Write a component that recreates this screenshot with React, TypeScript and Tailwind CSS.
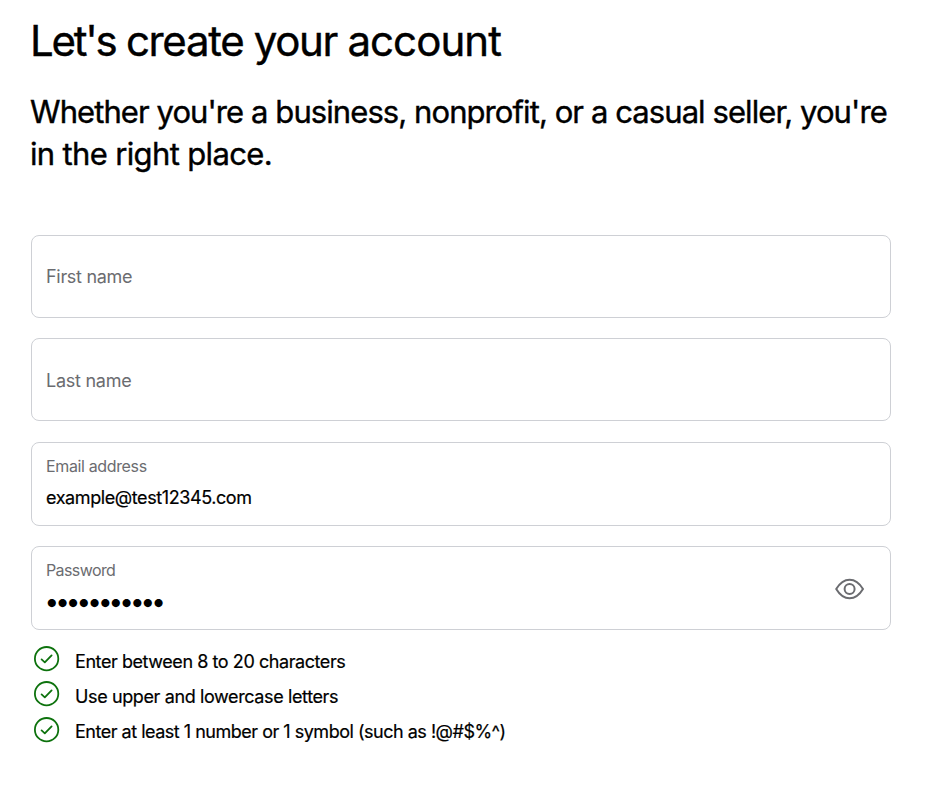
import type { ReactNode } from "react";

function Field({ className, children }: { className: string; children: ReactNode }) {
  return (
    <div className={`flex w-[860px] rounded-[8px] border border-[#ced0d5] bg-white pl-[14px] pr-[25px] ${className}`}>
      {children}
    </div>
  );
}

function EyeIcon() {
  return (
    <svg className="mt-px" width="30" height="22" viewBox="0 0 30 22" fill="none" stroke="#6b6c70" strokeWidth="2">
      <path d="M1.200 11C4.700 5.200 9.200 1.700 14.600 1.700S24.500 5.200 28 11C24.500 16.800 20 20.300 14.600 20.300S4.700 16.800 1.200 11Z" strokeLinejoin="round" />
      <circle cx="14.6" cy="11" r="5" />
    </svg>
  );
}

function CheckIcon() {
  return (
    <svg className="shrink-0" width="26" height="26" viewBox="0 0 26 26" fill="none" stroke="#0d720d">
      <circle cx="12.6" cy="12.7" r="11.7" strokeWidth="1.8" />
      <path d="M7.600 13.400L10.800 16.300L17.600 9.400" strokeWidth="1.800" strokeLinecap="round" strokeLinejoin="round" />
    </svg>
  );
}

function Rule({ className, textClass, children }: { className: string; textClass: string; children: ReactNode }) {
  return (
    <li className={`flex items-start gap-[15px] ${className}`}>
      <CheckIcon />
      <span className={`whitespace-nowrap text-[18px] leading-[26px] [-webkit-text-stroke:0.2px_black] ${textClass}`}>{children}</span>
    </li>
  );
}

export default function App() {
  return (
    <main className="h-[786px] w-[936px] overflow-hidden bg-white pl-[31px] pt-[12px] font-['Inter','Liberation_Sans',sans-serif] text-black">
      <h1 className="-ml-px whitespace-nowrap text-[42px] leading-[58px] tracking-[-1.35px] [-webkit-text-stroke:0.4px_black]">
        <span className="tracking-[-2.25px]">Let's</span> create your <span className="tracking-[-0.95px]">account</span>
      </h1>
      <h2 className="mt-[21px] whitespace-nowrap text-[31px] leading-[42px] [-webkit-text-stroke:0.4px_black]">
        <span className="-ml-px block tracking-[-0.92px]">Whether you're a business, nonprofit, or a casual seller, you're</span>
        <span className="-ml-px block tracking-[-0.65px]">in the right place.</span>
      </h2>

      <form className="mt-[60px] flex flex-col">
        <Field className="h-[83px] items-center">
          <label className="text-[18px] leading-[26px] tracking-[-0.3px] text-[#6b6c70]">First name</label>
        </Field>
        <Field className="mt-[20px] h-[83px] items-center">
          <label className="pt-[2px] text-[18px] leading-[26px] tracking-[-0.25px] text-[#6b6c70]">Last name</label>
        </Field>
        <Field className="mt-[21px] h-[84px] flex-col pt-[11px]">
          <label className="text-[16px] leading-[24px] tracking-[-0.36px] text-[#6b6c70]">Email address</label>
          <span className="mt-[7px] text-[18px] leading-[26px] tracking-[-0.41px] [-webkit-text-stroke:0.2px_black]">example@test12345.com</span>
        </Field>
        <Field className="mt-[20px] h-[84px] items-center justify-between">
          <div className="flex h-full flex-col pt-[11px]">
            <label className="text-[16px] leading-[24px] tracking-[-0.6px] text-[#6b6c70]">Password</label>
            <span className="-ml-[1.5px] mt-[7px] text-[26px] leading-[26px] tracking-[-3.95px]">•••••••••••</span>
          </div>
          <EyeIcon />
        </Field>
      </form>

      <ul className="ml-[3px] mt-[16px]">
        <Rule className="h-[35px]" textClass="mt-[3px] tracking-[-0.43px]">Enter between 8 to 20 characters</Rule>
        <Rule className="h-[36px]" textClass="mt-[3px] tracking-[-0.38px]">Use upper and lowercase letters</Rule>
        <Rule className="h-[35px]" textClass="mt-[2px] tracking-[-0.49px]">Enter at least 1 number or 1 symbol (such as !@#$%^)</Rule>
      </ul>
    </main>
  );
}
